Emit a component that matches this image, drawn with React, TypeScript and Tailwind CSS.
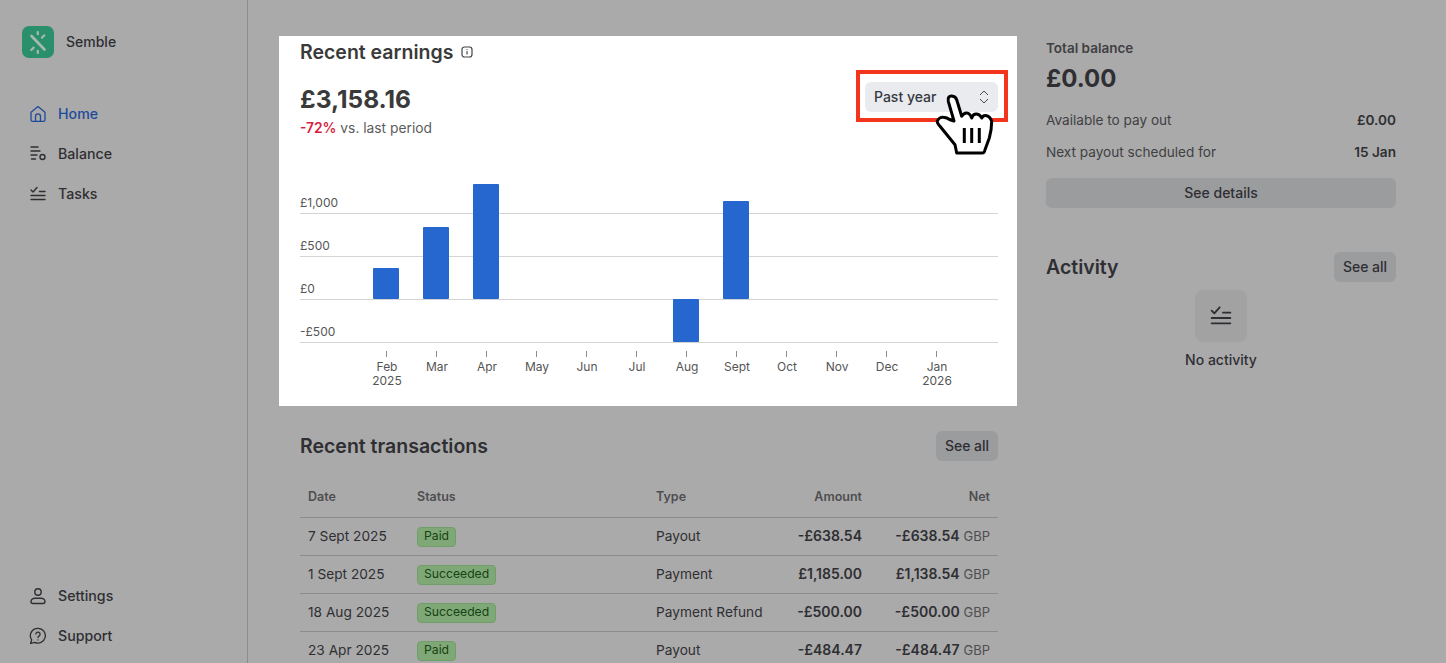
import { ChevronsUpDown } from 'lucide-react'

const font = { fontFamily: 'Inter, "Liberation Sans", sans-serif' }

function HomeIcon() {
  return (
    <svg width="18" height="18" viewBox="0 0 18 18" fill="none" stroke="#1e4a9a" strokeWidth="1.3" strokeLinejoin="round">
      <path d="M2 7.2 9 1.6l7 5.6v7.6a1.6 1.6 0 0 1-1.6 1.6H3.6A1.6 1.6 0 0 1 2 14.800z" />
      <path d="M6.500 16.400v-5a2.500 2.500 0 0 1 5 0v5" />
    </svg>
  )
}

function BalanceIcon() {
  return (
    <svg width="18" height="18" viewBox="0 0 18 18" fill="none" stroke="#2f2f33" strokeWidth="1.4" strokeLinecap="round">
      <path d="M2 2h7M2 6h9M2 10h6M2.500 14h4" />
      <circle cx="13.500" cy="12" r="2.500" />
    </svg>
  )
}

function TasksIcon({ size = 18 }: { size?: number }) {
  return (
    <svg width={size} height={size} viewBox="0 0 18 18" fill="none" stroke="#2f2f33" strokeWidth="1.4" strokeLinecap="round" strokeLinejoin="round">
      <path d="m2 5 2 2 4-4.500" />
      <path d="M10.500 6.500h5.500M2 10.500h14M2 14.500h14" />
    </svg>
  )
}

function SettingsIcon() {
  return (
    <svg width="18" height="18" viewBox="0 0 18 18" fill="none" stroke="#2f2f33" strokeWidth="1.4">
      <circle cx="9" cy="5" r="3.200" />
      <path d="M2 14.500c0-2 2.200-3.200 4-3.200h6c1.800 0 4 1.200 4 3.200 0 1.300-.8 2-2 2H4c-1.200 0-2-.7-2-2z" />
    </svg>
  )
}

function SupportIcon() {
  return (
    <svg width="18" height="18" viewBox="0 0 18 18" fill="none" stroke="#2f2f33" strokeWidth="1.3" strokeLinecap="round" strokeLinejoin="round">
      <path d="M9 1.300a7.400 7.400 0 1 1-3.400 14l-4 1.200 1.100-3.600A7.400 7.400 0 0 1 9 1.300z" />
      <path d="M6.900 7a2.100 2.100 0 1 1 3.300 1.900c-.8.500-1.200.9-1.200 1.700" />
      <path d="M9 13v.1" />
    </svg>
  )
}

function NavItem({ icon, label, active }: { icon: React.ReactNode; label: string; active?: boolean }) {
  return (
    <div className="flex h-[40px] items-center gap-[11px] pl-[29px]">
      {icon}
      <span className={`text-[14.200px] font-medium ${active ? 'text-[#1e4a9a]' : 'text-[#2f2f33]'}`}>{label}</span>
    </div>
  )
}

function Sidebar() {
  return (
    <aside className="flex h-full w-[248px] shrink-0 flex-col border-r border-[#8c8c8c]">
      <div className="flex items-center gap-[12px] pl-[22px] pt-[26px]">
        <svg width="32" height="32" viewBox="0 0 32 32" strokeLinecap="round">
          <rect width="32" height="32" rx="7" fill="#2a8f6b" />
          <g stroke="#a9b9b2" fill="none">
            <path d="M9.500 10 22.500 23.500" strokeWidth="2.600" />
            <path d="M15.800 6v2.200M15.800 24.800V27M22.300 9.300l-2.400 2.400M9.300 24l2.400-2.400" strokeWidth="2.200" />
          </g>
        </svg>
        <span className="text-sm font-medium text-[#2f2f33]">Semble</span>
      </div>
      <nav className="mt-[36px]">
        <NavItem icon={<HomeIcon />} label="Home" active />
        <NavItem icon={<BalanceIcon />} label="Balance" />
        <NavItem icon={<TasksIcon />} label="Tasks" />
      </nav>
      <div className="mt-auto pb-[7px]">
        <NavItem icon={<SettingsIcon />} label="Settings" />
        <NavItem icon={<SupportIcon />} label="Support" />
      </div>
    </aside>
  )
}

const months = [
  ['Feb', 87],
  ['Mar', 137],
  ['Apr', 187],
  ['May', 237],
  ['Jun', 287],
  ['Jul', 337],
  ['Aug', 387],
  ['Sept', 437],
  ['Oct', 487],
  ['Nov', 537],
  ['Dec', 587],
  ['Jan', 637],
] as const

function EarningsChart() {
  const labels = [
    ['£1,000', 37],
    ['£500', 80],
    ['£0', 123],
    ['-£500', 166],
  ] as const
  const bars = [
    [73, 102, 31],
    [123, 61, 72],
    [173, 18, 115],
    [373, 133, 43],
    [423, 35, 98],
  ]
  return (
    <svg width="698" height="240" viewBox="0 0 698 240" className="mt-[28px] block" style={font}>
      {[47, 90, 133, 176].map((y) => (
        <line key={y} x1="0" x2="698" y1={y + 0.5} y2={y + 0.5} stroke="#d4d4d4" />
      ))}
      {labels.map(([t, y]) => (
        <text key={t} x="0" y={y + 4} fontSize="12" fill="#555">
          {t}
        </text>
      ))}
      {bars.map(([x, y, h]) => (
        <rect key={x} x={x} y={y} width="26" height={h} fill="#2566cf" rx="1" />
      ))}
      {months.map(([m, x]) => (
        <g key={m}>
          <line x1={x - 0.5} x2={x - 0.5} y1="185" y2="191" stroke="#8a8a8a" />
          <text x={x} y="205" fontSize="12" fill="#555" textAnchor="middle">
            {m}
          </text>
        </g>
      ))}
      <text x="87" y="219" fontSize="12" fill="#555" textAnchor="middle">2025</text>
      <text x="637" y="219" fontSize="12" fill="#555" textAnchor="middle">2026</text>
    </svg>
  )
}

function HandCursor() {
  return (
    <svg width="62" height="66" viewBox="0 0 62 66" className="absolute left-[655px] top-[56px]" strokeLinejoin="round" strokeLinecap="round">
      <path
        d="M20 29 14.300 9.300c-1-4 1.400-5.500 3.400-5.300 2.500.2 4.300 1.700 5 3.700l5 16.600c1.500-2.400 3.300-3.400 5-3.300 2.500.2 4 2.200 5 5 .8-2.800 2.700-4.200 5-4 2.300.2 4 1.700 5 4 1-2 3-2.800 5-2.300 2.500.6 4 2.800 5 5.600 0 6-1 11.700-2.400 16.700L51 57.700c-.5 2.500-1 3.300-3 3.300l-25.300 0L21 52.700 6 34.300c-2-2.300-3.200-3.700-2.700-5 .7-2.500 3.500-4.300 6-4 2.500.2 4.800 1 6.700 2.400z"
        fill="#fff"
        stroke="#000"
        strokeWidth="3"
      />
      <path d="M30.300 36v15M37.700 36v15M45.300 36v15" stroke="#000" strokeWidth="3" strokeLinecap="butt" fill="none" />
    </svg>
  )
}

function EarningsCard() {
  return (
    <section className="relative h-[370px] w-[738px] overflow-visible bg-white pl-[21px] pr-[19px] text-[#3a3a3a]">
      <div className="flex items-center gap-[8px] pt-[4px]">
        <h2 className="text-[19.500px] leading-[24px] font-semibold">Recent earnings</h2>
        <svg width="12" height="12" viewBox="0 0 12 12" fill="none" stroke="#444" strokeWidth="1.200" strokeLinecap="round">
          <rect x="1" y="1" width="10" height="10" rx="2.500" />
          <path d="M6 5.500v2.500M6 3.500v.1" />
        </svg>
      </div>
      <div className="mt-[19px] flex items-start justify-between">
        <div>
          <div className="text-[24.500px] leading-[32px] font-bold">£3,158.16</div>
          <div className="mt-[3px] text-[13.800px] leading-[20px] text-[#5c5c5c]">
            <span className="font-semibold text-[#d81e3f]">-72%</span> vs. last period
          </div>
        </div>
        <div className="mt-[-1px] flex h-[30px] w-[133px] items-center justify-between rounded-md bg-[#e9ebef] pl-[9px] pr-[5px] text-sm font-medium text-[#36393f]">
          Past year
          <ChevronsUpDown size={18} strokeWidth={1.2} />
        </div>
      </div>
      <EarningsChart />
      <div className="absolute left-[577px] top-[34px] h-[52px] w-[152px] border-[4px] border-[#f4341d]" />
      <HandCursor />
    </section>
  )
}

const rows = [
  ['7 Sept 2025', 'Paid', 'Payout', '-£638.54', '-£638.54'],
  ['1 Sept 2025', 'Succeeded', 'Payment', '£1,185.00', '£1,138.54'],
  ['18 Aug 2025', 'Succeeded', 'Payment Refund', '-£500.00', '-£500.00'],
  ['23 Apr 2025', 'Paid', 'Payout', '-£484.47', '-£484.47'],
]

const cols = 'grid grid-cols-[109px_239px_120px_86px_128px] items-center px-2'

function Transactions() {
  return (
    <section className="ml-[21px] mt-[25px] w-[698px] text-[#2f2f33]">
      <div className="flex h-[30px] items-center justify-between">
        <h2 className="pt-[2px] text-[19.500px] font-semibold">Recent transactions</h2>
        <button className="h-[30px] w-[62px] rounded-md bg-[#9b9c9e] text-sm font-medium text-[#2f2f33]">See all</button>
      </div>
      <div className={`${cols} mt-[21px] h-[36px] border-b border-[#8c8c8c] pb-[4px] text-[12.500px] font-semibold text-[#4e4e50]`}>
        <span>Date</span>
        <span>Status</span>
        <span>Type</span>
        <span className="text-right">Amount</span>
        <span className="text-right">Net</span>
      </div>
      {rows.map(([date, status, type, amount, net]) => (
        <div key={date} className={`${cols} h-[38px] border-b border-[#8c8c8c] pb-[1px] text-[13.700px] text-[#2f2f33]`}>
          <span>{date}</span>
          <span>
            <span className="inline-flex h-[20px] items-center rounded-[4px] border border-[#6f9f69] bg-[#80a876] px-[6px] text-[12.200px] font-normal text-[#144314]">
              {status}
            </span>
          </span>
          <span>{type}</span>
          <span className="text-right text-sm font-semibold">{amount}</span>
          <span className="text-right">
            <span className="text-sm font-semibold">{net}</span> <span className="text-[13px] text-[#4e4e50]">GBP</span>
          </span>
        </div>
      ))}
    </section>
  )
}

function RightColumn() {
  return (
    <aside className="ml-[29px] w-[350px] shrink-0 pt-[39px] text-[#2f2f33]">
      <div className="text-[13.500px] leading-[18px] font-semibold text-[#404042]">Total balance</div>
      <div className="mt-[6px] text-[24px] leading-[32px] font-bold">£0.00</div>
      <div className="mt-[9px] flex h-[32px] items-center justify-between text-[13.600px]">
        <span className="text-[#404042]">Available to pay out</span>
        <span className="font-semibold">£0.00</span>
      </div>
      <div className="flex h-[32px] items-center justify-between text-[13.600px]">
        <span className="text-[#404042]">Next payout scheduled for</span>
        <span className="font-semibold">15 Jan</span>
      </div>
      <button className="mt-[10px] block h-[30px] w-full rounded-md bg-[#9b9c9e] text-sm font-medium">See details</button>
      <div className="mt-[44px] flex h-[30px] items-center justify-between">
        <h2 className="pt-[2px] text-[19.500px] font-semibold">Activity</h2>
        <button className="h-[30px] w-[62px] rounded-md bg-[#9b9c9e] text-sm font-medium">See all</button>
      </div>
      <div className="mt-[8px] flex flex-col items-center">
        <div className="flex h-[52px] w-[52px] items-center justify-center rounded-lg bg-[#a2a2a3]">
          <TasksIcon size={24} />
        </div>
        <div className="mt-[8px] text-sm font-medium">No activity</div>
      </div>
    </aside>
  )
}

export default function App() {
  return (
    <div className="flex h-[663px] w-[1446px] overflow-hidden bg-[#aaaaaa]" style={font}>
      <Sidebar />
      <main className="ml-[31px] w-[738px] shrink-0 pt-[36px]">
        <EarningsCard />
        <Transactions />
      </main>
      <RightColumn />
    </div>
  )
}
